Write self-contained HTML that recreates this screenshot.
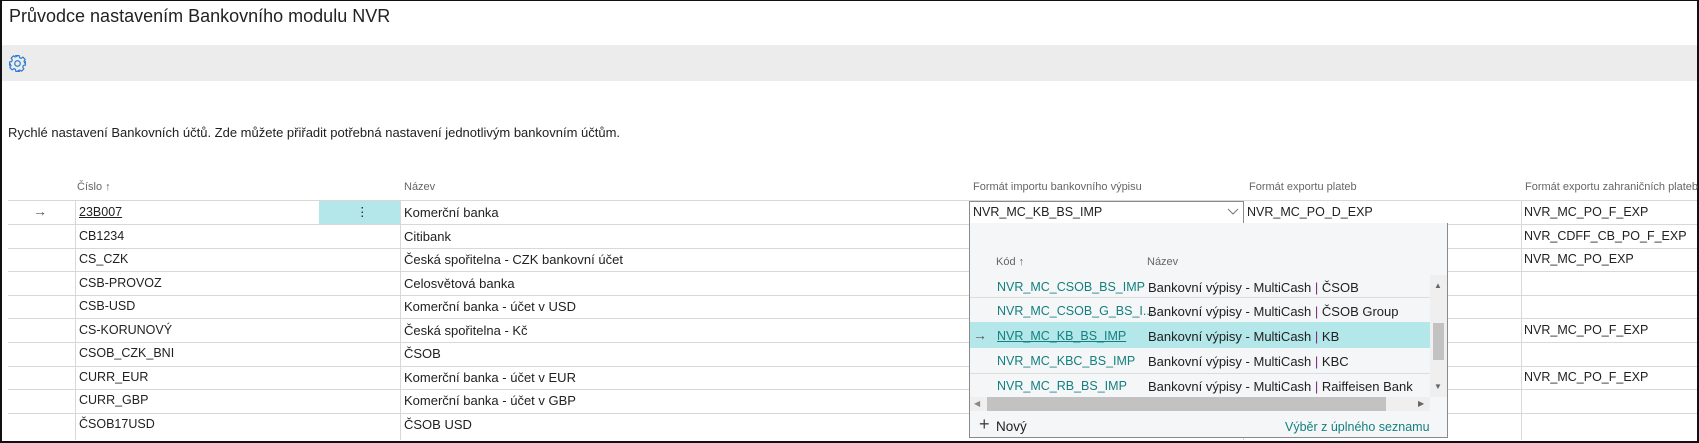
<!DOCTYPE html>
<html><head><meta charset="utf-8"><style>
*{margin:0;padding:0;box-sizing:border-box}
body{width:1699px;height:443px;background:#fff;font-family:"Liberation Sans",sans-serif;color:#212121;position:relative;overflow:hidden}
.a{position:absolute;white-space:nowrap}
.t{font-size:12.5px}
.n{font-size:13px}
.h{font-size:11px;color:#666}
.hl{position:absolute;height:1px;background:#d8d8d8}
.vl{position:absolute;width:1px;background:#d8d8d8}
.lk{color:#14807f}
.p{color:#7a2a7a}
</style></head><body>
<div class="a" style="left:0;top:0;width:1699px;height:443px;border:2px solid #111;border-top-width:1px"></div>
<div class="a" style="left:9px;top:6px;font-size:18px;color:#222">Průvodce nastavením Bankovního modulu NVR</div>
<div class="a" style="left:2px;top:45px;width:1695px;height:36px;background:#ececec"></div>
<svg class="a" style="left:8px;top:54px" width="19" height="19" viewBox="0 0 24 24" fill="none" stroke="#2b7cd3" stroke-width="1.5"><path d="M10 2h4l.6 2.6 1.9.8 2.3-1.4 2.8 2.8-1.4 2.3.8 1.9L22 10v4l-2.6.6-.8 1.9 1.4 2.3-2.8 2.8-2.3-1.4-1.9.8L14 22h-4l-.6-2.6-1.9-.8-2.3 1.4-2.8-2.8 1.4-2.3-.8-1.9L2 14v-4l2.6-.6.8-1.9-1.4-2.3 2.8-2.8 2.3 1.4 1.9-.8z"/><circle cx="12" cy="12" r="3.5"/></svg>
<div class="a n" style="left:8px;top:125px">Rychlé nastavení Bankovních účtů. Zde můžete přiřadit potřebná nastavení jednotlivým bankovním účtům.</div>
<div class="a h" style="left:77px;top:181px">Číslo ↑</div>
<div class="a h" style="left:404px;top:181px">Název</div>
<div class="a h" style="left:973px;top:181px">Formát importu bankovního výpisu</div>
<div class="a h" style="left:1249px;top:181px">Formát exportu plateb</div>
<div class="a h" style="left:1525px;top:181px">Formát exportu zahraničních plateb</div>
<div class="hl" style="left:8px;width:1689px;top:200px"></div>
<div class="hl" style="left:8px;width:1689px;top:224px"></div>
<div class="hl" style="left:8px;width:1689px;top:248px"></div>
<div class="hl" style="left:8px;width:1689px;top:271px"></div>
<div class="hl" style="left:8px;width:1689px;top:295px"></div>
<div class="hl" style="left:8px;width:1689px;top:318px"></div>
<div class="hl" style="left:8px;width:1689px;top:342px"></div>
<div class="hl" style="left:8px;width:1689px;top:366px"></div>
<div class="hl" style="left:8px;width:1689px;top:389px"></div>
<div class="hl" style="left:8px;width:1689px;top:413px"></div>
<div class="vl" style="left:75px;top:200px;height:240px"></div>
<div class="vl" style="left:400px;top:200px;height:240px"></div>
<div class="vl" style="left:1243px;top:200px;height:240px"></div>
<div class="vl" style="left:1521px;top:200px;height:240px"></div>
<div class="a" style="left:319px;top:201px;width:81px;height:23px;background:#b3e7ea"></div>
<div class="a t" style="left:356px;top:204px">⋮</div>
<div class="a" style="left:33px;top:203px;font-size:14px;color:#555">→</div>
<div class="a t" style="left:79px;top:205px;text-decoration:underline">23B007</div>
<div class="a t" style="left:79px;top:229px">CB1234</div>
<div class="a t" style="left:79px;top:252px">CS_CZK</div>
<div class="a t" style="left:79px;top:276px">CSB-PROVOZ</div>
<div class="a t" style="left:79px;top:299px">CSB-USD</div>
<div class="a t" style="left:79px;top:323px">CS-KORUNOVÝ</div>
<div class="a t" style="left:79px;top:346px">CSOB_CZK_BNI</div>
<div class="a t" style="left:79px;top:370px">CURR_EUR</div>
<div class="a t" style="left:79px;top:393px">CURR_GBP</div>
<div class="a t" style="left:79px;top:417px">ČSOB17USD</div>
<div class="a n" style="left:404px;top:205px">Komerční banka</div>
<div class="a n" style="left:404px;top:229px">Citibank</div>
<div class="a n" style="left:404px;top:252px">Česká spořitelna - CZK bankovní účet</div>
<div class="a n" style="left:404px;top:276px">Celosvětová banka</div>
<div class="a n" style="left:404px;top:299px">Komerční banka - účet v USD</div>
<div class="a n" style="left:404px;top:323px">Česká spořitelna - Kč</div>
<div class="a n" style="left:404px;top:346px">ČSOB</div>
<div class="a n" style="left:404px;top:370px">Komerční banka - účet v EUR</div>
<div class="a n" style="left:404px;top:393px">Komerční banka - účet v GBP</div>
<div class="a n" style="left:404px;top:417px">ČSOB USD</div>
<div class="a t" style="left:1247px;top:205px">NVR_MC_PO_D_EXP</div>
<div class="a t" style="left:1524px;top:205px">NVR_MC_PO_F_EXP</div>
<div class="a t" style="left:1524px;top:229px">NVR_CDFF_CB_PO_F_EXP</div>
<div class="a t" style="left:1524px;top:252px">NVR_MC_PO_EXP</div>
<div class="a t" style="left:1524px;top:323px">NVR_MC_PO_F_EXP</div>
<div class="a t" style="left:1524px;top:370px">NVR_MC_PO_F_EXP</div>
<div class="a" style="left:969px;top:201px;width:275px;height:23px;border:1px solid #8a8a8a;background:#fff"></div>
<div class="a t" style="left:973px;top:205px">NVR_MC_KB_BS_IMP</div>
<svg class="a" style="left:1227px;top:208px" width="12" height="8"><path d="M1 1l5 5 5-5" fill="none" stroke="#777"/></svg>
<div class="a" style="left:969px;top:223px;width:479px;height:215px;background:#f5f6f7;border:1px solid #8a8a8a;border-top:none"></div>
<div class="a h" style="left:996px;top:256px">Kód ↑</div>
<div class="a h" style="left:1147px;top:256px">Název</div>
<div class="hl" style="left:970px;width:460px;top:297px;background:#dcdcdc"></div>
<div class="a" style="left:970px;top:322px;width:460px;height:26px;background:#b3e7ea"></div>
<div class="hl" style="left:970px;width:460px;top:373px;background:#dcdcdc"></div>
<div class="a t lk" style="left:997px;top:280px">NVR_MC_CSOB_BS_IMP</div>
<div class="a t lk" style="left:997px;top:304px">NVR_MC_CSOB_G_BS_I...</div>
<div class="a" style="left:973px;top:327px;font-size:14px;color:#555">→</div>
<div class="a t lk" style="left:997px;top:329px;text-decoration:underline">NVR_MC_KB_BS_IMP</div>
<div class="a t lk" style="left:997px;top:354px">NVR_MC_KBC_BS_IMP</div>
<div class="a t lk" style="left:997px;top:379px">NVR_MC_RB_BS_IMP</div>
<div class="a n" style="left:1148px;top:280px">Bankovní výpisy - MultiCash <span class="p">|</span> ČSOB</div>
<div class="a n" style="left:1148px;top:304px">Bankovní výpisy - MultiCash <span class="p">|</span> ČSOB Group</div>
<div class="a n" style="left:1148px;top:329px">Bankovní výpisy - MultiCash <span class="p">|</span> KB</div>
<div class="a n" style="left:1148px;top:354px">Bankovní výpisy - MultiCash <span class="p">|</span> KBC</div>
<div class="a n" style="left:1148px;top:379px">Bankovní výpisy - MultiCash <span class="p">|</span> Raiffeisen Bank</div>
<div class="a" style="left:1430px;top:275px;width:17px;height:122px;background:#efefef"></div>
<div class="a" style="left:1433px;top:323px;width:11px;height:37px;background:#c2c2c2"></div>
<div class="a" style="left:1434px;top:281px;font-size:8px;color:#666">▲</div>
<div class="a" style="left:1434px;top:382px;font-size:8px;color:#666">▼</div>
<div class="a" style="left:970px;top:397px;width:460px;height:14px;background:#efefef"></div>
<div class="a" style="left:987px;top:397px;width:399px;height:14px;background:#c2c2c2"></div>
<div class="a" style="left:974px;top:399px;font-size:8px;color:#888">◀</div>
<div class="a" style="left:1418px;top:399px;font-size:8px;color:#666">▶</div>
<div class="a" style="left:979px;top:414px;font-size:18px;color:#444;font-weight:300">+</div>
<div class="a" style="left:996px;top:419px;font-size:13.5px">Nový</div>
<div class="a lk" style="left:1285px;top:420px;font-size:12.5px">Výběr z úplného seznamu</div>
</body></html>
